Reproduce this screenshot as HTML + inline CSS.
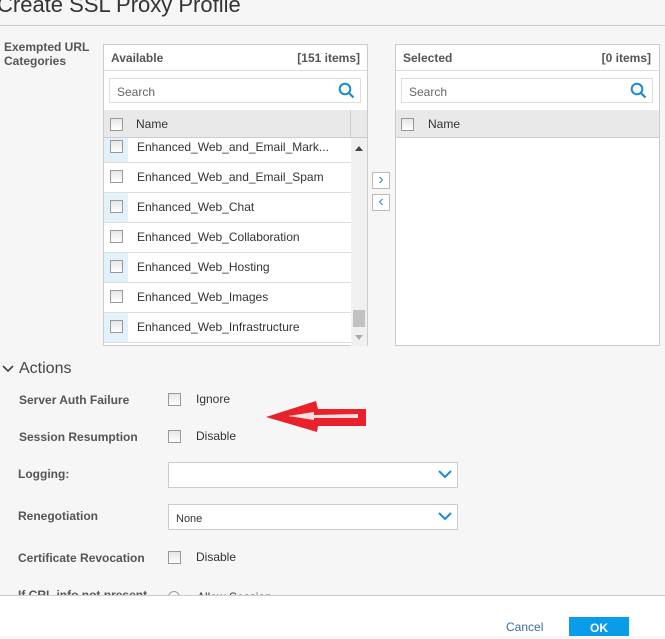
<!DOCTYPE html>
<html><head><style>
*{box-sizing:border-box;margin:0;padding:0}
body{width:665px;height:636px;overflow:hidden;background:#f7f6f6;font-family:"Liberation Sans",Arial,sans-serif;position:relative;color:#333}
.a{position:absolute}
.cb{position:absolute;width:13px;height:13px;border:1px solid #999;background:linear-gradient(#e6e6e6,#fff)}
.lbl{position:absolute;font-size:12px;font-weight:bold;color:#555}
.row{position:absolute;left:0;width:247px;height:30px;border-bottom:1px solid #ddd;font-size:12px;color:#333}
.row span{position:absolute;left:33px;top:7px}
.row .l{position:absolute;left:0;top:0;width:24px;height:29px}
.row .cb{left:6px;top:7px}
</style></head><body>
<div class="a" style="left:-3px;top:-8px;font-size:22px;color:#333;white-space:nowrap">Create SSL Proxy Profile</div>
<div class="a" style="left:0;top:25px;width:665px;height:1px;background:#ccc"></div>
<div class="lbl" style="left:4px;top:40px;line-height:14px">Exempted URL<br>Categories</div>

<div class="a" style="left:103px;top:44px;width:265px;height:302px;border:1px solid #ccc;background:#fff">
 <div class="a" style="left:7px;top:6px;font-size:12px;font-weight:bold;color:#555">Available</div>
 <div class="a" style="right:7px;top:6px;font-size:12px;font-weight:bold;color:#555">[151 items]</div>
 <div class="a" style="left:0;top:25px;width:263px;height:1px;background:#ddd"></div>
 <div class="a" style="left:5px;top:33px;width:252px;height:25px;border:1px solid #ddd;background:#fff"><span class="a" style="left:7px;top:6px;font-size:12px;color:#666">Search</span>
 <svg class="a" style="right:5px;top:3px" width="17" height="17" viewBox="0 0 17 17"><circle cx="7" cy="7" r="5.3" fill="none" stroke="#1a8ad4" stroke-width="2"/><line x1="11" y1="11" x2="15.5" y2="15.5" stroke="#1a8ad4" stroke-width="2.2"/></svg></div>
 <div class="a" style="left:0;top:65px;width:263px;height:28px;background:#e9e9e9;border-bottom:1px solid #ccc"><div class="cb" style="left:6px;top:8px"></div><span class="a" style="left:32px;top:7px;font-size:12px">Name</span><div class="a" style="left:246px;top:0;width:1px;height:28px;background:#ccc"></div></div>
 <div class="a" style="left:0;top:93px;width:247px;height:208px;overflow:hidden">
  <div class="row" style="top:-5px"><div class="l" style="background:#e3f1fa"></div><div class="cb"></div><span>Enhanced_Web_and_Email_Mark...</span></div>
  <div class="row" style="top:25px"><div class="l"></div><div class="cb"></div><span>Enhanced_Web_and_Email_Spam</span></div>
  <div class="row" style="top:55px"><div class="l" style="background:#e3f1fa"></div><div class="cb"></div><span>Enhanced_Web_Chat</span></div>
  <div class="row" style="top:85px"><div class="l"></div><div class="cb"></div><span>Enhanced_Web_Collaboration</span></div>
  <div class="row" style="top:115px"><div class="l" style="background:#e3f1fa"></div><div class="cb"></div><span>Enhanced_Web_Hosting</span></div>
  <div class="row" style="top:145px"><div class="l"></div><div class="cb"></div><span>Enhanced_Web_Images</span></div>
  <div class="row" style="top:175px"><div class="l" style="background:#e3f1fa"></div><div class="cb"></div><span>Enhanced_Web_Infrastructure</span></div>
 </div>
 <div class="a" style="left:247px;top:93px;width:16px;height:208px;background:#f0f0f0">
  <div class="a" style="left:4px;top:8px;border:4px solid transparent;border-bottom:5px solid #444;border-top:0"></div>
  <div class="a" style="left:2px;top:172px;width:12px;height:17px;background:#c2c2c2"></div>
  <div class="a" style="left:4px;top:197px;border:4px solid transparent;border-top:5px solid #aaa;border-bottom:0"></div>
 </div>
</div>

<div class="a" style="left:372px;top:172px;width:18px;height:17px;border:1px solid #bbb;background:#fff;color:#3a8fc4;font-size:16px;text-align:center;line-height:14px">›</div>
<div class="a" style="left:372px;top:194px;width:18px;height:17px;border:1px solid #bbb;background:#fff;color:#3a8fc4;font-size:16px;text-align:center;line-height:14px">‹</div>

<div class="a" style="left:395px;top:44px;width:265px;height:302px;border:1px solid #ccc;background:#fff">
 <div class="a" style="left:7px;top:6px;font-size:12px;font-weight:bold;color:#555">Selected</div>
 <div class="a" style="right:8px;top:6px;font-size:12px;font-weight:bold;color:#555">[0 items]</div>
 <div class="a" style="left:0;top:25px;width:263px;height:1px;background:#ddd"></div>
 <div class="a" style="left:5px;top:33px;width:252px;height:25px;border:1px solid #ddd;background:#fff"><span class="a" style="left:7px;top:6px;font-size:12px;color:#666">Search</span>
 <svg class="a" style="right:5px;top:3px" width="17" height="17" viewBox="0 0 17 17"><circle cx="7" cy="7" r="5.3" fill="none" stroke="#1a8ad4" stroke-width="2"/><line x1="11" y1="11" x2="15.5" y2="15.5" stroke="#1a8ad4" stroke-width="2.2"/></svg></div>
 <div class="a" style="left:0;top:65px;width:263px;height:28px;background:#e9e9e9;border-bottom:1px solid #ccc"><div class="cb" style="left:5px;top:8px"></div><span class="a" style="left:32px;top:7px;font-size:12px">Name</span></div>
</div>

<svg class="a" style="left:2px;top:364px" width="12" height="10" viewBox="0 0 12 10"><path d="M1 2 L6 7 L11 2" fill="none" stroke="#444" stroke-width="1.6"/></svg>
<div class="a" style="left:19px;top:360px;font-size:16px;color:#444">Actions</div>

<div class="lbl" style="left:19px;top:393px">Server Auth Failure</div>
<div class="cb" style="left:168px;top:393px"></div><div class="a" style="left:196px;top:392px;font-size:12px">Ignore</div>
<div class="lbl" style="left:19px;top:430px">Session Resumption</div>
<div class="cb" style="left:168px;top:430px"></div><div class="a" style="left:196px;top:429px;font-size:12px">Disable</div>
<div class="lbl" style="left:18px;top:467px">Logging:</div>
<div class="a" style="left:168px;top:462px;width:290px;height:26px;border:1px solid #ccc;background:#fff"></div>
<svg class="a" style="left:438px;top:470px" width="14" height="9" viewBox="0 0 14 9"><path d="M1 1 L7 7 L13 1" fill="none" stroke="#1a8ad4" stroke-width="2"/></svg>
<div class="lbl" style="left:18px;top:509px">Renegotiation</div>
<div class="a" style="left:168px;top:504px;width:290px;height:26px;border:1px solid #ccc;background:#fff"><span class="a" style="left:7px;top:8px;font-size:11px">None</span></div>
<svg class="a" style="left:438px;top:512px" width="14" height="9" viewBox="0 0 14 9"><path d="M1 1 L7 7 L13 1" fill="none" stroke="#1a8ad4" stroke-width="2"/></svg>
<div class="lbl" style="left:18px;top:551px">Certificate Revocation</div>
<div class="cb" style="left:168px;top:551px"></div><div class="a" style="left:196px;top:550px;font-size:12px">Disable</div>
<div class="lbl" style="left:18px;top:588px">If CRL info not present</div>
<div class="a" style="left:168px;top:591px;width:12px;height:12px;border:1px solid #999;border-radius:50%"></div>
<div class="a" style="left:197px;top:590px;font-size:12px">Allow Session</div>

<svg class="a" style="left:264px;top:400px" width="104" height="34" viewBox="0 0 104 34"><path d="M2 17 L52 1 L54 9 L102 9 L102 26 L54 26 L53 32 Z" fill="#e8212a"/><path d="M24 16 L50 12 L50 15 L94 14 L94 18 L50 18 L50 20 Z" fill="#fff" opacity="0.85"/></svg>

<div class="a" style="left:0;top:595px;width:665px;height:41px;background:#fff;border-top:1px solid #ccc"></div>
<div class="a" style="left:506px;top:620px;font-size:12px;color:#3a6ea5">Cancel</div>
<div class="a" style="left:569px;top:617px;width:60px;height:19px;background:#0a9bea;color:#fff;font-size:12px;font-weight:bold;text-align:center;line-height:22px">OK</div>
</body></html>
